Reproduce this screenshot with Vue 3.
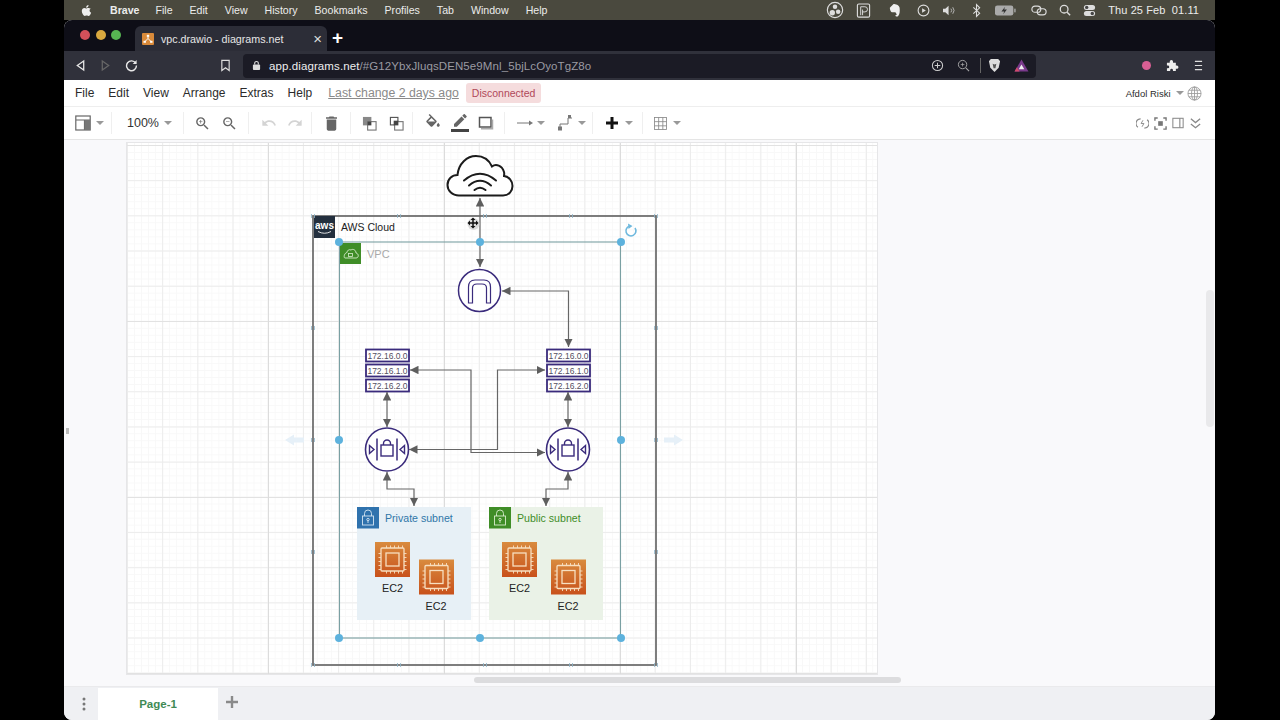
<script setup>
const menus = ['File', 'Edit', 'View', 'History', 'Bookmarks', 'Profiles', 'Tab', 'Window', 'Help']
const appMenus = ['File', 'Edit', 'View', 'Arrange', 'Extras', 'Help']

// diagram data, in page pixels
const tables = [366, 547]
const rows = [
  { y: 349.5, label: '172.16.0.0' },
  { y: 364.5, label: '172.16.1.0' },
  { y: 379.5, label: '172.16.2.0' }
]
const nats = [387, 568]
const chips = [
  { x: 375, y: 542, tx: 392.5, ty: 592 },
  { x: 419, y: 559.5, tx: 436, ty: 610 },
  { x: 502, y: 542, tx: 519.5, ty: 592 },
  { x: 551, y: 559.5, tx: 568, ty: 610 }
]
const arrows = [
  'M480 198 V267',
  'M502 291 H568.5 V347',
  'M387 392 V427',
  'M568 392 V427',
  'M410 370 H471 V452.5 H545',
  'M545 370 H497.5 V449.5 H409',
  'M387 472 V489 H414 V506',
  'M568 472 V489 H546 V506'
]
const dots = [
  [339, 242], [480, 242], [621, 242],
  [339, 440], [621, 440],
  [339, 638], [480, 638], [621, 638]
]
const ticks = [
  [313, 216], [399, 216], [485, 216], [571, 216], [656, 216],
  [313, 328], [656, 328], [313, 440], [656, 440], [313, 552], [656, 552],
  [313, 665], [399, 665], [485, 665], [571, 665], [656, 665]
]
const chipPins = [4, 8, 12, 16, 20]
</script>

<template>
  <div class="screen">
    <header class="menubar">
      <svg class="apple" viewBox="0 0 14 16"><path d="M9.6 1c.1 1-.3 1.800-.8 2.400-.6.700-1.400 1.100-2.200 1-.1-.9.300-1.800.8-2.300C8 1.400 8.900 1 9.600 1zM12.500 5.500c-1 .6-1.600 1.500-1.600 2.600 0 1.300.8 2.300 2 2.800-.3.900-.7 1.700-1.200 2.400-.7 1-1.400 1.700-2.300 1.700s-1.200-.5-2.300-.5-1.500.5-2.300.5c-.9 0-1.600-.8-2.300-1.800C1.500 11.900 1 10.200 1 8.700 1 6.100 2.600 4.800 4.300 4.800c.9 0 1.700.6 2.300.6.500 0 1.400-.7 2.500-.7 1.200 0 2.600.3 3.400 1.800z" fill="#eee"/></svg>
      <span class="brand">Brave</span>
      <nav class="mac-menus">
        <span v-for="m in menus" :key="m">{{ m }}</span>
      </nav>
      <div class="status">
        <svg class="st" viewBox="0 0 20 20" width="18" height="18"><circle cx="10" cy="10" r="8.500" fill="none" stroke="#ddd" stroke-width="1.300"/><circle cx="7" cy="13" r="3" fill="#ddd"/><circle cx="13.500" cy="12" r="2.500" fill="#ddd"/><circle cx="10" cy="6.500" r="2.500" fill="#ddd"/></svg>
        <svg class="st" viewBox="0 0 16 16" width="15" height="15"><rect x="1.500" y="1" width="13" height="14" rx="1.500" fill="none" stroke="#ddd" stroke-width="1.200"/><path d="M5 13V4h4.500a2.500 2.500 0 010 5.500H7M7 13V7" fill="none" stroke="#ddd"/></svg>
        <svg class="st" viewBox="0 0 14 16" width="13" height="15"><path d="M3 4l3-3c2 0 6 1 6.500 4 .5 4 0 7-1.500 9-1 .9-3 .7-3-.7 0-1 2-1 2-.3l-2-3H5C3 10 2 7 2 5z" fill="#eee"/></svg>
        <svg class="st" viewBox="0 0 14 14" width="13" height="13"><circle cx="7" cy="7" r="5.800" fill="none" stroke="#ddd" stroke-width="1.200"/><path d="M5.500 4.500v5l4-2.500z" fill="#ddd"/></svg>
        <svg class="st" viewBox="0 0 16 14" width="15" height="13"><path d="M1 5h2.500L7 2v10L3.500 9H1z" fill="#ddd"/><path d="M9.500 5a3 3 0 010 4M11.500 3.500a5.500 5.500 0 010 7" fill="none" stroke="#bbb"/></svg>
        <svg class="st" viewBox="0 0 10 16" width="9" height="15"><path d="M1.500 4.500l7 6.500L5 14.500v-13l3.500 3.500-7 6.500" fill="none" stroke="#ddd" stroke-width="1.200"/></svg>
        <svg class="st" viewBox="0 0 24 12" width="22" height="11"><rect x="0" y="0.500" width="20" height="11" rx="2.500" fill="#aaa"/><rect x="21" y="4" width="1.500" height="4" fill="#aaa"/><path d="M11 2L7 7h3l-1 3 4-5h-3z" fill="#333"/></svg>
        <svg class="st" viewBox="0 0 18 14" width="16" height="13"><rect x="1" y="2" width="10" height="7" rx="3.500" fill="none" stroke="#ddd" stroke-width="1.300"/><rect x="7" y="5" width="10" height="7" rx="3.500" fill="none" stroke="#ddd" stroke-width="1.300"/></svg>
        <svg class="st" viewBox="0 0 14 14" width="12" height="12"><circle cx="6" cy="6" r="4.500" fill="none" stroke="#ddd" stroke-width="1.500"/><path d="M9.500 9.500L13 13" stroke="#ddd" stroke-width="1.700"/></svg>
        <svg class="st" viewBox="0 0 14 14" width="13" height="13"><rect x="1" y="1" width="12" height="5.500" rx="2.700" fill="#ddd"/><rect x="1" y="7.500" width="12" height="5.500" rx="2.700" fill="#ddd"/><circle cx="4" cy="3.700" r="1.800" fill="#444"/><circle cx="10" cy="10.200" r="1.800" fill="#444"/></svg>
        <span class="clock">Thu 25 Feb&nbsp; 01.11</span>
      </div>
    </header>

    <div class="window">
      <div class="tabstrip">
        <div class="lights"><i class="red"></i><i class="yellow"></i><i class="green"></i></div>
        <div class="tab">
          <svg class="favicon" viewBox="0 0 12 12" width="12" height="12"><rect width="12" height="12" rx="1" fill="#d98a3a"/><path d="M6 2.500v3M6 5.500l-3 3M6 5.500l3 3" stroke="#fff" stroke-width="1"/><rect x="4.800" y="1.800" width="2.400" height="2" fill="#fff"/><rect x="1.500" y="7.800" width="2.400" height="2" fill="#fff"/><rect x="8.100" y="7.800" width="2.400" height="2" fill="#fff"/></svg>
          <span class="tab-title">vpc.drawio - diagrams.net</span>
          <span class="tab-x">×</span>
        </div>
        <span class="tab-plus">+</span>
      </div>

      <div class="addressbar">
        <div class="nav-icons">
          <svg viewBox="0 0 12 14" width="11" height="13"><path d="M9.500 2L2.500 7l7 5z" fill="none" stroke="#e8e8e8" stroke-width="1.400"/></svg>
          <svg viewBox="0 0 12 14" width="11" height="13"><path d="M2.500 2l7 5-7 5z" fill="none" stroke="#666" stroke-width="1.400"/></svg>
          <svg viewBox="0 0 14 14" width="13" height="13"><path d="M11.500 4.500A5.300 5.300 0 1012.300 7" fill="none" stroke="#e8e8e8" stroke-width="1.500"/><path d="M12.500 1v4.300H8.300z" fill="#e8e8e8"/></svg>
        </div>
        <svg class="bookmark" viewBox="0 0 12 14" width="11" height="13"><path d="M2 1.500h8v11L6 9.500l-4 3z" fill="none" stroke="#ddd" stroke-width="1.300"/></svg>
        <div class="urlbar">
          <svg viewBox="0 0 10 12" width="9" height="11"><rect x="1" y="5" width="8" height="6" rx="1" fill="#ddd"/><path d="M3 5V3.500a2 2 0 014 0V5" fill="none" stroke="#ddd" stroke-width="1.200"/></svg>
          <span class="url"><b>app.diagrams.net</b>/#G12YbxJluqsDEN5e9Mnl_5bjLcOyoTgZ8o</span>
          <div class="url-right">
            <svg viewBox="0 0 14 14" width="13" height="13"><circle cx="7" cy="7" r="5.500" fill="none" stroke="#ccc" stroke-width="1.100"/><path d="M7 4v6M4 7h6" stroke="#ccc" stroke-width="1.100"/></svg>
            <svg viewBox="0 0 14 14" width="13" height="13"><circle cx="6" cy="6" r="4.500" fill="none" stroke="#aaa"/><path d="M9.500 9.500L13 13" stroke="#aaa" stroke-width="1.200"/><path d="M6 4v4M4 6h4" stroke="#aaa" stroke-width=".8"/></svg>
            <i class="url-sep"></i>
            <svg viewBox="0 0 14 16" width="13" height="15"><path d="M3 1h8l2 2.500-1.500 7L7 15l-4.500-4.500L1 3.500z" fill="#ddd"/><path d="M5 6l2 1 2-1-1 5H6z" fill="#555"/></svg>
            <svg viewBox="0 0 16 14" width="15" height="13"><path d="M8 .5L15.500 13.500H.5z" fill="#7a3a8c"/><path d="M8 6l3 5H5z" fill="#eee"/><path d="M.5 13.500L3 9l3 4.500z" fill="#d04a6a"/></svg>
          </div>
        </div>
        <i class="pink-dot"></i>
        <svg class="puzzle" viewBox="0 0 14 14" width="13" height="13"><path d="M1 4h3V3a1.800 1.800 0 013.600 0v1h3v3h1a1.800 1.800 0 010 3.600h-1V13H7.500v-1a1.500 1.500 0 00-3 0v1H1v-3h1a1.500 1.500 0 000-3H1z" fill="#eee"/></svg>
        <svg class="burger" viewBox="0 0 10 12" width="9" height="11"><path d="M1 1.500h8M1 6h8M1 10.500h8" stroke="#ddd" stroke-width="1.300"/></svg>
      </div>

      <div class="appbar">
        <nav class="app-menus">
          <span v-for="m in appMenus" :key="m">{{ m }}</span>
        </nav>
        <span class="last-change">Last change 2 days ago</span>
        <span class="badge">Disconnected</span>
        <div class="user">
          <span>Afdol Riski</span>
          <i class="caret"></i>
          <svg viewBox="0 0 16 16" width="15" height="15"><g fill="none" stroke="#999" stroke-width=".9"><circle cx="8" cy="8" r="7"/><ellipse cx="8" cy="8" rx="3.200" ry="7"/><path d="M8 1v14M1 8h14M2 4.500h12M2 11.500h12"/></g></svg>
        </div>
      </div>

      <div class="toolbar">
        <div class="tgroup g1">
          <svg viewBox="0 0 16 16" width="16" height="16"><rect x=".8" y="1" width="14.400" height="14" fill="none" stroke="#666" stroke-width="1.200"/><path d="M1 5h14M9.500 5v10" stroke="#666" stroke-width="1.200"/><rect x="9.500" y="5" width="5.500" height="10" fill="#777"/></svg>
          <i class="caret"></i>
        </div>
        <div class="tgroup g2"><span class="zoomval">100%</span><i class="caret"></i></div>
        <div class="tgroup g3">
          <svg viewBox="0 0 24 24" width="17" height="17"><path d="M15.500 14h-.79l-.28-.27A6.470 6.470 0 0016 9.500 6.500 6.500 0 109.500 16c1.610 0 3.090-.59 4.230-1.570l.27.28v.79l5 4.990L20.490 19l-4.990-5zm-6 0C7.010 14 5 11.990 5 9.500S7.010 5 9.500 5 14 7.010 14 9.500 11.990 14 9.500 14z" fill="#666"/><path d="M12 10h-2v2H9v-2H7V9h2V7h1v2h2v1z" fill="#666"/></svg>
          <svg viewBox="0 0 24 24" width="17" height="17"><path d="M15.500 14h-.79l-.28-.27A6.470 6.470 0 0016 9.500 6.500 6.500 0 109.500 16c1.610 0 3.090-.59 4.230-1.570l.27.28v.79l5 4.990L20.490 19l-4.990-5zm-6 0C7.010 14 5 11.990 5 9.500S7.010 5 9.500 5 14 7.010 14 9.500 11.990 14 9.500 14z" fill="#666"/><path d="M7 9h5v1H7z" fill="#666"/></svg>
        </div>
        <div class="tgroup g4">
          <svg viewBox="0 0 24 24" width="16" height="16"><path d="M12.500 8c-2.650 0-5.050.99-6.900 2.600L2 7v9h9l-3.620-3.620c1.390-1.160 3.160-1.880 5.120-1.880 3.540 0 6.550 2.310 7.600 5.500l2.370-.78C21.080 11.030 17.150 8 12.500 8z" fill="#d4d4d4"/></svg>
          <svg viewBox="0 0 24 24" width="16" height="16"><path d="M18.400 10.600C16.550 8.990 14.150 8 11.500 8c-4.650 0-8.580 3.030-9.960 7.220L3.900 16c1.050-3.190 4.050-5.500 7.600-5.500 1.950 0 3.730.72 5.120 1.880L13 16h9V7l-3.600 3.600z" fill="#d4d4d4"/></svg>
        </div>
        <div class="tgroup g5">
          <svg viewBox="0 0 24 24" width="19" height="19"><path d="M6 19c0 1.100.9 2 2 2h8c1.100 0 2-.9 2-2V7H6v12zM19 4h-3.500l-1-1h-5l-1 1H5v2h14V4z" fill="#666"/></svg>
        </div>
        <div class="tgroup g6">
          <svg viewBox="0 0 16 16" width="15" height="15"><rect x="1" y="1" width="9" height="9" fill="#888"/><rect x="6" y="6" width="9" height="9" fill="#fff" stroke="#777" stroke-width="1.200"/><rect x="6" y="6" width="4" height="4" fill="#444"/></svg>
          <svg viewBox="0 0 16 16" width="15" height="15"><rect x="1.500" y="1.500" width="8" height="8" fill="#fff" stroke="#555" stroke-width="1.200"/><rect x="6" y="6" width="9" height="9" fill="#fff" stroke="#777" stroke-width="1.200"/><rect x="5" y="5" width="5" height="5" fill="#444"/></svg>
        </div>
        <div class="tgroup g7">
          <svg viewBox="0 0 24 24" width="18" height="18"><path d="M16.560 8.940L7.620 0 6.210 1.410l2.380 2.380-5.150 5.150c-.59.59-.59 1.540 0 2.120l5.500 5.500c.29.290.68.440 1.060.440s.77-.15 1.060-.44l5.500-5.500c.59-.58.59-1.530 0-2.120zM5.210 10L10 5.210 14.790 10H5.210zM19 11.500s-2 2.170-2 3.500c0 1.100.9 2 2 2s2-.9 2-2c0-1.330-2-3.500-2-3.500z" fill="#666"/></svg>
          <svg viewBox="0 0 24 24" width="18" height="18"><path d="M17.750 7L14 3.250l-10 10V17h3.750l10-10zm2.960-2.960c.39-.39.39-1.020 0-1.410L18.370.29a.996.996 0 00-1.410 0L15 2.250 18.750 6l1.960-1.960z" fill="#666"/><path d="M0 20h24v4H0z" fill="#444"/></svg>
          <svg viewBox="0 0 16 16" width="16" height="16"><rect x="1.500" y="2.500" width="11.500" height="9.500" fill="#fff" stroke="#555" stroke-width="1.500"/><path d="M3 13.800h11.500V4.500" fill="none" stroke="#aaa" stroke-width="1.500"/></svg>
        </div>
        <div class="tgroup g8">
          <svg viewBox="0 0 16 10" width="16" height="10"><path d="M0 5h13" stroke="#777" stroke-width="1"/><path d="M12 2.500L16 5l-4 2.500z" fill="#777"/></svg>
          <i class="caret"></i>
          <svg class="wp" viewBox="0 0 16 16" width="16" height="16"><path d="M2 13V9h8V3h4" fill="none" stroke="#777"/><rect x="0" y="11.500" width="4" height="4" fill="#777"/><rect x="10" y="0" width="3" height="3" fill="#777"/></svg>
          <i class="caret"></i>
        </div>
        <div class="tgroup g9">
          <svg viewBox="0 0 14 14" width="14" height="14"><path d="M7 1v12M1 7h12" stroke="#111" stroke-width="3"/></svg>
          <i class="caret"></i>
        </div>
        <div class="tgroup g10">
          <svg viewBox="0 0 14 14" width="13" height="13"><g fill="none" stroke="#888" stroke-width=".9"><rect x=".5" y=".5" width="13" height="13"/><path d="M5 .5v13M9.500 .5v13M.5 5h13M.5 9.500h13"/></g></svg>
          <i class="caret"></i>
        </div>
        <div class="t-right">
          <svg viewBox="0 0 14 14" width="13" height="13"><path d="M5 2A5 5 0 002 11M9 12a5 5 0 003-9" fill="none" stroke="#888" stroke-width="1.300"/><path d="M7.500 3.500L5.500 7h3l-2 3.500" fill="none" stroke="#888"/></svg>
          <svg viewBox="0 0 14 14" width="13" height="13"><path d="M1 4V1h3M10 1h3v3M13 10v3h-3M4 13H1v-3" fill="none" stroke="#777" stroke-width="1.500"/><rect x="4.500" y="4.500" width="5" height="5" fill="#777"/></svg>
          <svg viewBox="0 0 14 14" width="12" height="12"><rect x="1" y="1.500" width="12" height="11" fill="none" stroke="#888" stroke-width="1.200"/><rect x="8.500" y="1.500" width="1.300" height="11" fill="#888"/></svg>
          <svg viewBox="0 0 14 14" width="13" height="13"><path d="M2 2l5 4 5-4M2 7.500l5 4 5-4" fill="none" stroke="#888" stroke-width="1.400"/></svg>
        </div>
      </div>

      <main class="canvas">
        <div class="page"></div>
        <i class="left-grip"></i>
        <i class="vscroll"></i>
        <i class="hscroll"></i>

        <svg class="diagram" viewBox="64 140 1151 546">
          <defs>
            <marker id="head" viewBox="0 0 8 8" refX="8" refY="4" markerWidth="8.500" markerHeight="8.500" markerUnits="userSpaceOnUse" orient="auto-start-reverse">
              <path d="M0 0L8 4L0 8z" fill="#5e5e5e"/>
            </marker>
            <linearGradient id="ec2grad" x1="0" y1="1" x2="0" y2="0">
              <stop offset="0" stop-color="#c8511b"/>
              <stop offset="1" stop-color="#d98b3e"/>
            </linearGradient>
            <g id="chip">
              <rect width="35" height="35" fill="url(#ec2grad)"/>
              <rect x="6" y="6" width="23" height="23" rx="1" fill="none" stroke="#f7dfc0" stroke-width="1.300"/>
              <rect x="11" y="11" width="13" height="13" fill="none" stroke="#f7dfc0" stroke-width="1.300"/>
              <g stroke="#f7dfc0" stroke-width=".9">
                <path v-for="p in chipPins" :key="'t'+p" :d="`M${7.500 + p} 3.500V6M${7.500 + p} 29v2.500M3.500 ${7.500 + p}H6M29 ${7.500 + p}h2.500`"/>
              </g>
            </g>
            <g id="nat">
              <circle r="21.500" fill="#fff" stroke="#3a2b7c" stroke-width="1.600"/>
              <g fill="none" stroke="#3a2b7c" stroke-width="1.400">
                <path d="M-17.500 -4L-13 0L-17.500 4Z"/>
                <path d="M17.500 -4L13 0L17.500 4Z"/>
                <path d="M-10 -11V11M10 -11V11" stroke-width="1.500"/>
                <rect x="-6" y="-4.500" width="12" height="11"/>
                <path d="M-3.500 -4.500V-6A3.500 3.500 0 0 1 3.500 -6V-4.500"/>
              </g>
            </g>
          </defs>

          <!-- drag hints -->
          <path d="M285 440l9-5.500v3h10v5h-10v3z" fill="#e6f0f8"/>
          <path d="M683 440l-9-5.500v3h-10v5h10v3z" fill="#e6f0f8"/>

          <!-- cloud -->
          <path d="M459 195.500C452 195.500 447.500 190.500 447.500 185C447.500 179 452 175 457.500 175C458.500 163.500 467 156 476 156C483.500 156 489 160 492 166.500C496 163.500 502 165.500 504 172C504.500 174 504 175.500 504 176C509 176.500 512.500 181 512.500 186C512.500 191 509 195.500 503 195.500Z" fill="#fff" stroke="#1c1c1c" stroke-width="2"/>
          <g fill="none" stroke="#1c1c1c" stroke-width="2" stroke-linecap="round">
            <path d="M464 180.500Q480 167 496 180.500"/>
            <path d="M469 185.500Q480 176 491 185.500"/>
            <path d="M474.500 190Q480 185.500 485.500 190"/>
          </g>

          <!-- groups -->
          <rect x="313" y="216" width="343" height="449" fill="none" stroke="#707070" stroke-width="1.800"/>
          <rect x="339.500" y="242" width="281" height="396" fill="none" stroke="#7aa0a3" stroke-width="1.100"/>

          <rect x="314" y="216" width="21" height="22" fill="#232f3e"/>
          <text x="324.500" y="229" class="t-aws">aws</text>
          <path d="M318 231.500Q324.500 235 331 231.500" fill="none" stroke="#f3f3f3" stroke-width=".9"/>
          <text x="341" y="231" class="t-label">AWS Cloud</text>

          <rect x="340" y="243" width="21" height="21" fill="#3f8d27"/>
          <path d="M345 258h11c3 0 3-4.500 0-5c0-3-3-4.500-5-3-2-1-4 .5-4 2.500C344 253 343.500 258 345 258z" fill="none" stroke="#d8eccd" stroke-width=".9"/>
          <rect x="348.500" y="253.500" width="4" height="3" fill="none" stroke="#d8eccd" stroke-width=".8"/>
          <text x="367" y="258" class="t-vpc">VPC</text>

          <!-- internet gateway -->
          <circle cx="479.500" cy="290.500" r="21" fill="#fff" stroke="#3a2b7c" stroke-width="1.500"/>
          <path d="M468.500 303V287Q468.500 280 475 280H484Q490.500 280 490.500 287V303H486.500V288Q486.500 284 482 284H477Q472.500 284 472.500 288V303Z" fill="none" stroke="#3a2b7c" stroke-width="1.200"/>

          <!-- route tables -->
          <g v-for="x in tables" :key="x">
            <g v-for="r in rows" :key="r.y">
              <rect :x="x" :y="r.y" width="43" height="12" fill="#fff" stroke="#3a2b7c" stroke-width="1.800"/>
              <text :x="x + 21.500" :y="r.y + 9" class="t-ip">{{ r.label }}</text>
            </g>
          </g>
          <use v-for="x in nats" :key="'n' + x" href="#nat" :x="x" y="449.500"/>

          <!-- connectors -->
          <path v-for="(d, i) in arrows" :key="i" :d="d" fill="none" stroke="#666" stroke-width="1.200" marker-start="url(#head)" marker-end="url(#head)"/>

          <!-- subnets -->
          <rect x="357" y="507" width="114" height="113" fill="#e7f0f6"/>
          <rect x="357" y="507" width="22" height="21.500" fill="#2f72ad"/>
          <g fill="none" stroke="#d5e5f2" stroke-width=".9">
            <rect x="362.500" y="516" width="11" height="9"/>
            <path d="M364.500 516V513.500a3.500 3.500 0 017 0V516"/>
            <circle cx="368" cy="519.500" r="1.200"/>
            <path d="M368 520.700V523"/>
          </g>
          <text x="385" y="522" class="t-sub t-blue">Private subnet</text>

          <rect x="489" y="507" width="114" height="113" fill="#eaf2e7"/>
          <rect x="489" y="507" width="22" height="21.500" fill="#3f8d27"/>
          <g fill="none" stroke="#d8eccd" stroke-width=".9">
            <rect x="494.500" y="516" width="11" height="9"/>
            <path d="M496.500 516V513.500a3.500 3.500 0 017 0V516"/>
            <circle cx="500" cy="519.500" r="1.200"/>
            <path d="M500 520.700V523"/>
          </g>
          <text x="517" y="522" class="t-sub t-green">Public subnet</text>

          <g v-for="c in chips" :key="c.x">
            <use href="#chip" :x="c.x" :y="c.y"/>
            <text :x="c.tx" :y="c.ty" class="t-ec2">EC2</text>
          </g>

          <!-- selection handles -->
          <path v-for="t in ticks" :key="t.join()" :d="`M${t[0] - 1.500} ${t[1] - 2}v4M${t[0] + 1.500} ${t[1] - 2}v4`" stroke="#8fb5c9" stroke-width=".8"/>
          <circle v-for="d in dots" :key="d.join()" :cx="d[0]" :cy="d[1]" r="4" fill="#5db2dd"/>
          <path d="M635 228A5 5 0 1 1 630 226" fill="none" stroke="#6fb9de" stroke-width="1.600"/>
          <path d="M628 223.500l4.500 2.500-4 3z" fill="#6fb9de"/>

          <!-- move cursor -->
          <g transform="translate(473 223)">
            <circle r="6" fill="#dcdcdc" cx="0.500" cy="1"/>
            <path d="M-4 0H4M0 -4V4" stroke="#111" stroke-width="1.500"/>
            <path d="M-5.500 0L-3 -2.500V2.500ZM5.500 0L3 -2.500V2.500ZM0 -5.500L-2.500 -3H2.500ZM0 5.500L-2.500 3H2.500Z" fill="#111"/>
          </g>
        </svg>
      </main>

      <footer class="footer">
        <svg class="more" viewBox="0 0 4 14" width="4" height="14"><circle cx="2" cy="2" r="1.500" fill="#777"/><circle cx="2" cy="7" r="1.500" fill="#777"/><circle cx="2" cy="12" r="1.500" fill="#777"/></svg>
        <div class="page-tab">Page-1</div>
        <svg class="add" viewBox="0 0 12 12" width="12" height="12"><path d="M6 0v12M0 6h12" stroke="#8a8a8a" stroke-width="2.400"/></svg>
      </footer>
    </div>
  </div>
</template>

<style>
html, body { margin: 0; background: #000; }
</style>

<style scoped>
.screen {
  width: 1280px;
  height: 720px;
  background: #000;
  display: flex;
  flex-direction: column;
  padding-left: 64px;
  box-sizing: border-box;
  overflow: hidden;
  font-family: "Liberation Sans", Arial, sans-serif;
}
.menubar {
  width: 1151px;
  height: 20px;
  flex: none;
  background: #4a493e;
  display: flex;
  align-items: center;
  color: #ececec;
  font-size: 10.6px;
}
.apple { width: 11px; height: 13px; margin-left: 17px; }
.brand { font-weight: 700; margin-left: 18px; }
.mac-menus { display: flex; gap: 17px; margin-left: 16px; }
.status { margin-left: auto; display: flex; align-items: center; }
.st { display: block; }
.st:nth-child(1) { margin-right: 12px; }
.st:nth-child(2) { margin-right: 17px; }
.st:nth-child(3) { margin-right: 16px; }
.st:nth-child(4) { margin-right: 12px; }
.st:nth-child(5) { margin-right: 15px; }
.st:nth-child(6) { margin-right: 14px; }
.st:nth-child(7) { margin-right: 14px; }
.st:nth-child(8) { margin-right: 12px; }
.st:nth-child(9) { margin-right: 12px; }
.st:nth-child(10) { margin-right: 12px; }
.clock { font-size: 11px; margin-right: 16px; letter-spacing: .1px; }

.window {
  width: 1151px;
  height: 700px;
  flex: none;
  border-radius: 8px;
  overflow: hidden;
  display: flex;
  flex-direction: column;
  background: #fff;
}
.tabstrip {
  height: 31px;
  flex: none;
  background: #0e0e17;
  display: flex;
  align-items: flex-end;
  color: #e6e6e6;
}
.lights { display: flex; gap: 5.500px; padding: 0 0 11px 16px; }
.lights i { width: 10px; height: 10px; border-radius: 50%; display: block; }
.red { background: #d3505a; }
.yellow { background: #d9a83f; }
.green { background: #57b452; }
.tab {
  margin-left: 14px;
  width: 192px;
  height: 25px;
  background: #2c2d37;
  border-radius: 6px 6px 0 0;
  display: flex;
  align-items: center;
  box-sizing: border-box;
  padding: 0 5px 0 7px;
  font-size: 10.700px;
}
.favicon { flex: none; }
.tab-title { margin-left: 7px; }
.tab-x { margin-left: auto; font-size: 15px; line-height: 1; color: #ddd; }
.tab-plus { margin: 0 0 4px 5px; font-size: 19px; line-height: 1; font-weight: 700; color: #fff; }

.addressbar {
  height: 29px;
  flex: none;
  background: #30313b;
  display: flex;
  align-items: center;
}
.nav-icons { display: flex; gap: 14px; margin-left: 11px; align-items: center; }
.bookmark { margin-left: 82px; }
.urlbar {
  margin-left: 12px;
  width: 793px;
  height: 24px;
  background: #1b1b25;
  border-radius: 4px;
  display: flex;
  align-items: center;
  padding-left: 9px;
  box-sizing: border-box;
}
.url { margin-left: 8px; font-size: 11.500px; color: #9a9aa2; letter-spacing: .1px; }
.url b { font-weight: 400; color: #eee; }
.url-right { margin-left: auto; display: flex; align-items: center; gap: 13px; padding-right: 7px; }
.url-sep { width: 1px; height: 15px; background: #666; margin: 0 -5.500px 0 -3.500px; }
.pink-dot { width: 9px; height: 9px; border-radius: 50%; background: #d85f94; margin-left: 106px; }
.puzzle { margin-left: 15px; }
.burger { margin-left: 15px; }

.appbar {
  height: 27px;
  flex: none;
  background: #fff;
  border-bottom: 1px solid #eee;
  box-sizing: border-box;
  display: flex;
  align-items: center;
  color: #2b2b2b;
  font-size: 12px;
}
.app-menus { display: flex; gap: 14px; margin-left: 11px; }
.last-change { margin-left: 16px; color: #8a8a8a; text-decoration: underline; font-size: 12.300px; }
.badge {
  margin-left: 7px;
  background: #f5dcdd;
  color: #b0485a;
  font-size: 10.500px;
  padding: 4px 6px;
  border-radius: 3px;
}
.user { margin-left: auto; display: flex; align-items: center; font-size: 9.500px; padding-right: 13px; }
.user .caret { margin: 0 3.500px 0 5px; }
.caret {
  display: block;
  width: 0;
  height: 0;
  border: 4px solid transparent;
  border-top: 4px solid #999;
  border-bottom: 0;
}

.toolbar {
  height: 33px;
  flex: none;
  background: #fff;
  border-bottom: 1px solid #e5e5e5;
  box-sizing: border-box;
  display: flex;
  align-items: center;
}
.tgroup {
  height: 22px;
  box-sizing: border-box;
  border-right: 1px solid #efefef;
  display: flex;
  align-items: center;
  justify-content: center;
  flex: none;
}
.g1 { width: 48px; gap: 5px; padding-left: 3px; }
.g2 { width: 72px; gap: 5px; font-size: 12.500px; color: #333; padding-left: 4px; }
.g3 { width: 65px; gap: 10px; }
.g4 { width: 63px; gap: 10px; padding-left: 3px; }
.g5 { width: 39px; }
.g6 { width: 62px; gap: 12px; padding-left: 2px; }
.g7 { width: 92px; gap: 9px; }
.g8 { width: 88px; gap: 4px; padding-left: 5px; }
.wp { margin-left: 9px; }
.g9 { width: 50px; gap: 6px; padding-left: 2px; }
.g10 { border-right: 0; width: 48px; gap: 6px; }
.t-right { margin-left: auto; display: flex; align-items: center; gap: 5px; padding-right: 13px; }

.canvas {
  flex: 1;
  position: relative;
  background: #f9f9fb;
  overflow: hidden;
  padding-left: 63px;
}
.page {
  width: 750px;
  height: 531px;
  margin-top: 3px;
  box-shadow: 0 0 0 1px #e6e6e8;
  background-color: #fff;
  background-image:
    linear-gradient(to right, #dcdcdc 1px, transparent 1px),
    linear-gradient(to bottom, #e2e2e2 1px, transparent 1px),
    linear-gradient(to right, #ececec 1px, transparent 1px),
    linear-gradient(to bottom, #ececec 1px, transparent 1px),
    linear-gradient(to right, #f8f8f8 1px, transparent 1px),
    linear-gradient(to bottom, #f8f8f8 1px, transparent 1px);
  background-size:
    176px 176px, 176px 176px,
    35.200px 35.200px, 35.200px 35.200px,
    7.040px 7.040px, 7.040px 7.040px;
  background-position:
    141px 2px, 141px 2px,
    0 2px, 0 2px,
    0 2px, 0 2px;
}
.diagram {
  position: absolute;
  left: 0;
  top: 0;
  width: 1151px;
  height: 546px;
}
.left-grip {
  position: absolute;
  left: 2px;
  top: 288px;
  width: 3px;
  height: 6px;
  background: #bbb;
}
.vscroll {
  position: absolute;
  right: 1px;
  top: 150px;
  width: 8px;
  height: 137px;
  border-radius: 4px;
  background: #e9e9eb;
}
.hscroll {
  position: absolute;
  left: 410px;
  bottom: 3px;
  width: 427px;
  height: 6px;
  border-radius: 3px;
  background: #dcdcde;
}

.t-aws { fill: #fff; font-size: 10px; font-weight: 700; text-anchor: middle; }
.t-label { fill: #222; font-size: 10.500px; }
.t-vpc { fill: #a9a9a9; font-size: 11px; }
.t-ip { fill: #55505f; font-size: 8.500px; text-anchor: middle; }
.t-sub { font-size: 10.600px; }
.t-blue { fill: #2f76a8; }
.t-green { fill: #3f8d27; }
.t-ec2 { fill: #222; font-size: 10.800px; text-anchor: middle; }

.footer {
  height: 34px;
  flex: none;
  background: #eff0f3;
  border-top: 1px solid #eaeaec;
  box-sizing: border-box;
  display: flex;
  align-items: center;
}
.more { margin-left: 18px; }
.page-tab {
  margin-left: 12px;
  width: 120px;
  align-self: stretch;
  background: #fff;
  color: #3f8a55;
  font-size: 11.500px;
  font-weight: 700;
  display: flex;
  align-items: center;
  justify-content: center;
  margin-top: 1px;
}
.add { margin-left: 8px; margin-bottom: 3px; }
</style>
